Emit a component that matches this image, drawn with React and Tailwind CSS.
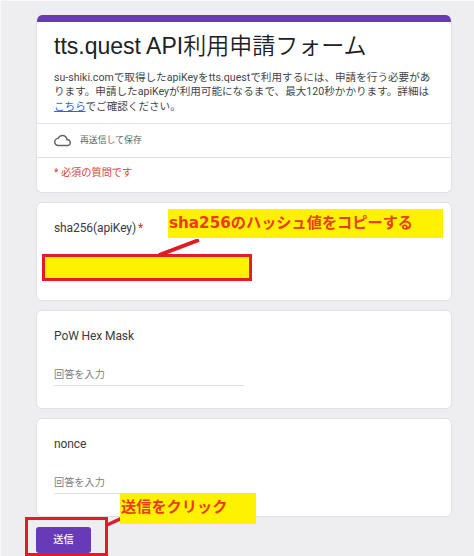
const Card = ({ className = '', children }) => (
    <section className={`relative rounded-md border border-[#dfe0e4] bg-white ${className}`}>
        {children}
    </section>
);

const Question = ({ label, required, className, children }) => (
    <Card className={`h-[99px] px-[17px] pt-[15px] ${className}`}>
        <h2 className="h-5 text-[12px] leading-5 tracking-[-0.1px] whitespace-nowrap text-[#3a3b3e]">
            {label}
            {required && <span className="ml-[2px] text-[#d93025]">*</span>}
        </h2>
        {children}
    </Card>
);

const ShortAnswer = () => (
    <input
        type="text"
        placeholder="回答を入力"
        className="mt-[17px] block h-[23px] w-[190px] border-b border-[#dfe1e4] bg-transparent text-[10.2px] text-gray-700 outline-none placeholder:text-[#808286]"
    />
);

const App = () => {
    return (
        <div className="relative h-[556px] w-[474px] overflow-hidden border-t border-l border-[#f8f8fa] bg-[#eeeef1] pt-[14px] pl-[35px] font-[Roboto,'Noto_Sans_CJK_JP',sans-serif]">
            <div className="w-[416px]">
                {/* Form header */}
                <Card className="h-[178px] overflow-hidden border-t-0">
                    <div className="-mx-px h-[7px] bg-[#673ab7]" />
                    <div className="h-[101px] px-[17px] pt-[9px]">
                        <h1 className="h-[30px] font-['Liberation_Sans','Noto_Sans_CJK_JP',sans-serif] text-[23px] leading-[30px] font-[350] whitespace-nowrap text-[#202124]">
                            tts.quest API利用申請フォーム
                        </h1>
                        <p className="mt-[10px] text-[10.6px] leading-[14.3px] whitespace-nowrap text-[#44464a]">
                            su-shiki.comで取得したapiKeyをtts.questで利用するには、申請を行う必要があ
                            <br />
                            ります。申請したapiKeyが利用可能になるまで、最大120秒かかります。詳細は
                            <br />
                            <a href="#" className="text-[#2a66d9] underline">こちら</a>でご確認ください。
                        </p>
                    </div>
                    <div className="flex h-[35px] items-center border-y border-[#dfe1e4] px-[17px]">
                        <svg viewBox="0 0 24 24" className="h-[17px] w-[17px] fill-[#5f6368]">
                            <path d="M19.35 10.04C18.67 6.59 15.64 4 12 4 9.11 4 6.6 5.64 5.35 8.04 2.34 8.36 0 10.91 0 14c0 3.31 2.69 6 6 6h13c2.76 0 5-2.24 5-5 0-2.64-2.05-4.78-4.65-4.96zM19 18H6c-2.21 0-4-1.79-4-4s1.79-4 4-4h.71C7.37 7.69 9.48 6 12 6c3.04 0 5.5 2.46 5.5 5.5v.5H19c1.66 0 3 1.34 3 3s-1.34 3-3 3z" />
                        </svg>
                        <span className="ml-[9px] text-[8.9px] text-[#5f6368]">再送信して保存</span>
                    </div>
                    <p className="px-[17px] pt-[7px] text-[10.2px] leading-4 text-[#dc4238]">* 必須の質問です</p>
                </Card>

                <Question label="sha256(apiKey)" required className="mt-[9px]">
                    {/* Highlighted answer box */}
                    <div className="-ml-[12px] mt-[16px] h-[27px] w-[210px] border-[3px] border-[#e81b24] bg-[#fff200]" />
                    <svg className="absolute top-[36px] left-[121px] h-4 w-[44px]" viewBox="0 0 44 16">
                        <path d="M1 16 41 1" stroke="#e01b24" strokeWidth="4" />
                    </svg>
                    <div className="absolute top-[6px] left-[131px] h-[29px] w-[275px] bg-[#fff200] pl-px font-['DejaVu_Sans','Noto_Sans_CJK_JP',sans-serif] text-[15.2px] leading-[29px] font-bold whitespace-nowrap text-[#ed3b1c]">
                        sha256のハッシュ値をコピーする
                    </div>
                </Question>

                <Question label="PoW Hex Mask" className="mt-[9px]">
                    <ShortAnswer />
                </Question>

                <Question label="nonce" className="mt-[9px]">
                    <ShortAnswer />
                </Question>

                {/* Submit */}
                <div className="relative mt-[9px]">
                    <button className="h-[26px] w-[55px] rounded-[3px] bg-[#673ab7] text-[10.2px] font-medium text-white">
                        送信
                    </button>
                    <div className="absolute -top-[9px] -left-[11px] h-[39px] w-[83px] border-[3px] border-[#e01b2c]" />
                    <svg className="absolute -top-[11px] left-[70px] h-3 w-[16px]" viewBox="0 0 16 12">
                        <path d="M1 10 16 3" stroke="#e01b2c" strokeWidth="3.5" />
                    </svg>
                    <div className="absolute -top-[33px] left-[84px] h-[31px] w-[136px] bg-[#fff200] pl-px text-[15.2px] leading-[28px] font-bold whitespace-nowrap text-[#ed3b1c]">
                        送信をクリック
                    </div>
                </div>
            </div>
        </div>
    );
};

export default App;
